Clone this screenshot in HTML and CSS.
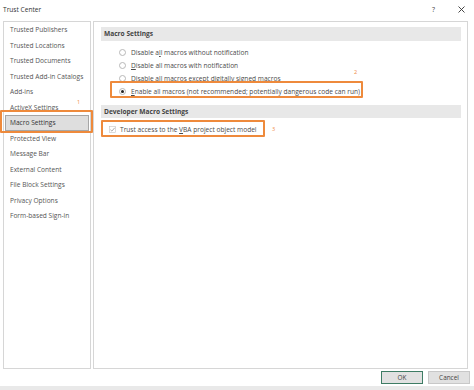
FILE: index.html
```html
<!DOCTYPE html>
<html>
<head>
<meta charset="utf-8">
<link rel="stylesheet" href="styles.css">
</head>
<body>
<div class="window">
  <div class="titlebar">
    <span class="title">Trust Center</span>
    <span class="help">?</span>
    <span class="close"><svg width="7" height="7" viewBox="0 0 7 7"><path d="M0.5 0.5 L6.5 6.5 M6.5 0.5 L0.5 6.5" stroke="#333" stroke-width="0.9" fill="none"/></svg></span>
  </div>
  <div class="main">
    <nav class="nav">
      <div class="nav-item">Trusted Publishers</div>
      <div class="nav-item">Trusted Locations</div>
      <div class="nav-item">Trusted Documents</div>
      <div class="nav-item">Trusted Add-in Catalogs</div>
      <div class="nav-item">Add-ins</div>
      <div class="nav-item">ActiveX Settings<span class="num num1">1</span></div>
      <div class="nav-item active">Macro Settings</div>
      <div class="nav-item">Protected View</div>
      <div class="nav-item">Message Bar</div>
      <div class="nav-item">External Content</div>
      <div class="nav-item">File Block Settings</div>
      <div class="nav-item">Privacy Options</div>
      <div class="nav-item">Form-based Sign-in</div>
    </nav>
    <section class="content">
      <div class="group-head">Macro Settings</div>
      <div class="opt"><span class="radio"></span><span>Disable a<u>l</u>l macros without notification</span></div>
      <div class="opt"><span class="radio"></span><span><u>D</u>isable all macros with notification</span></div>
      <div class="opt"><span class="radio"></span><span>Disable all macros except di<u>g</u>itally signed macros<span class="num num2">2</span></span></div>
      <div class="opt mark mark2"><span class="radio on"></span><span><u>E</u>nable all macros (not recommended; potentially dangerous code can run)</span></div>
      <div class="group-head head2">Developer Macro Settings</div>
      <div class="chk-row mark mark3"><span class="check"><svg width="7" height="7" viewBox="0 0 7 7"><rect x="0.4" y="0.4" width="6.2" height="6.2" fill="#fff" stroke="#c4c4c4" stroke-width="0.6"/><path d="M1.4 3.7 L2.9 5.1 L5.7 1.8" stroke="#8a8a8a" stroke-width="0.7" fill="none"/></svg></span><span>Trust access to the <u>V</u>BA project object model</span><span class="num num3">3</span></div>
    </section>
  </div>
  <div class="footer">
    <button class="btn ok">OK</button>
    <button class="btn">Cancel</button>
  </div>
  <div class="strip"></div>
</div>
</body>
</html>
```
FILE: styles.css
```css
html, body {
  margin: 0;
  padding: 0;
  background: #ffffff;
}
.window {
  width: 474px;
  height: 390px;
  display: flex;
  flex-direction: column;
  font-family: "Open Sans", "Noto Sans", sans-serif;
  font-size: 6.6px;
  color: #4a4a4a;
  overflow: hidden;
}
u {
  text-decoration-thickness: 0.5px;
  text-underline-offset: 1px;
}
.titlebar {
  height: 21px;
  display: flex;
  align-items: center;
  padding: 0 9px 0 3px;
  box-sizing: border-box;
}
.title {
  flex: 1;
  font-size: 6.6px;
  color: #333;
  margin-top: -3px;
}
.help {
  font-size: 7px;
  color: #444;
  margin-right: 23px;
  margin-top: -3px;
}
.close {
  display: flex;
  margin-top: -3px;
}
.main {
  height: 348px;
  display: flex;
  gap: 2px;
  padding: 0 6px 0 3px;
}
.nav {
  width: 86px;
  border: 1px solid #d6d6d6;
  display: flex;
  flex-direction: column;
}
.nav-item {
  height: 15.5px;
  line-height: 15.5px;
  padding-left: 6px;
  white-space: nowrap;
  position: relative;
  color: #555;
}
.nav-item.active {
  background: #dedede;
  box-shadow: inset 0 0 0 1px #a6a6a6;
  margin: 0 1px 0 1px;
  padding-left: 5px;
  color: #333;
}
.nav-item.active::after {
  content: "";
  position: absolute;
  left: -5px;
  right: -4px;
  top: -5px;
  bottom: -2px;
  border: 2px solid #ee8a3c;
  border-radius: 1px;
}
.num {
  position: absolute;
  color: #ef8a45;
  font-size: 5.5px;
  line-height: 1;
}
.num1 { left: 73px; top: 0px; }
.num2 { left: 223px; top: -4px; }
.num3 { left: 171px; top: 4px; }
.content {
  flex: 1;
  border: 1px solid #d6d6d6;
  padding: 5px 6px 0 7px;
  display: flex;
  flex-direction: column;
}
.group-head {
  height: 14px;
  line-height: 14px;
  background: #e8e8e8;
  padding-left: 3px;
  font-weight: 700;
  color: #444;
  margin-bottom: 5px;
}
.head2 {
  height: 13px;
  line-height: 13px;
  margin-top: 7px;
}
.opt {
  height: 13px;
  display: flex;
  align-items: center;
  padding-left: 18px;
  gap: 5px;
  position: relative;
  white-space: nowrap;
}
.opt > span:last-child { position: relative; }
.radio {
  width: 5px;
  height: 5px;
  border: 0.8px solid #b8b8b8;
  border-radius: 50%;
  flex: none;
  display: flex;
  align-items: center;
  justify-content: center;
  background: #fff;
}
.radio.on::before {
  content: "";
  width: 3px;
  height: 3px;
  border-radius: 50%;
  background: #222;
}
.mark { position: relative; }
.mark::after {
  content: "";
  position: absolute;
  border: 2px solid #ee8a3c;
  border-radius: 1px;
  pointer-events: none;
}
.mark2::after {
  left: 9px;
  top: -4px;
  width: 249px;
  height: 13px;
}
.chk-row {
  height: 13px;
  display: flex;
  align-items: center;
  padding-left: 8px;
  gap: 4px;
  white-space: nowrap;
  position: relative;
  margin-top: 0;
}
.mark3::after {
  left: 0px;
  top: -3px;
  width: 160px;
  height: 13px;
}
.check {
  width: 7px;
  height: 7px;
  display: flex;
  flex: none;
}
.footer {
  height: 17px;
  display: flex;
  justify-content: flex-end;
  align-items: center;
  gap: 5px;
  padding-right: 4px;
}
.btn {
  height: 13px;
  width: 42px;
  margin: 0;
  padding: 0;
  background: #e1e1e1;
  border: 1px solid #c8c8c8;
  font-family: "Open Sans", "Noto Sans", sans-serif;
  font-size: 6.4px;
  color: #444;
  border-radius: 0;
}
.btn.ok {
  border: 1.5px solid #3e7c64;
}
.strip {
  flex: 1;
  background: #e9e9e9;
}
```
